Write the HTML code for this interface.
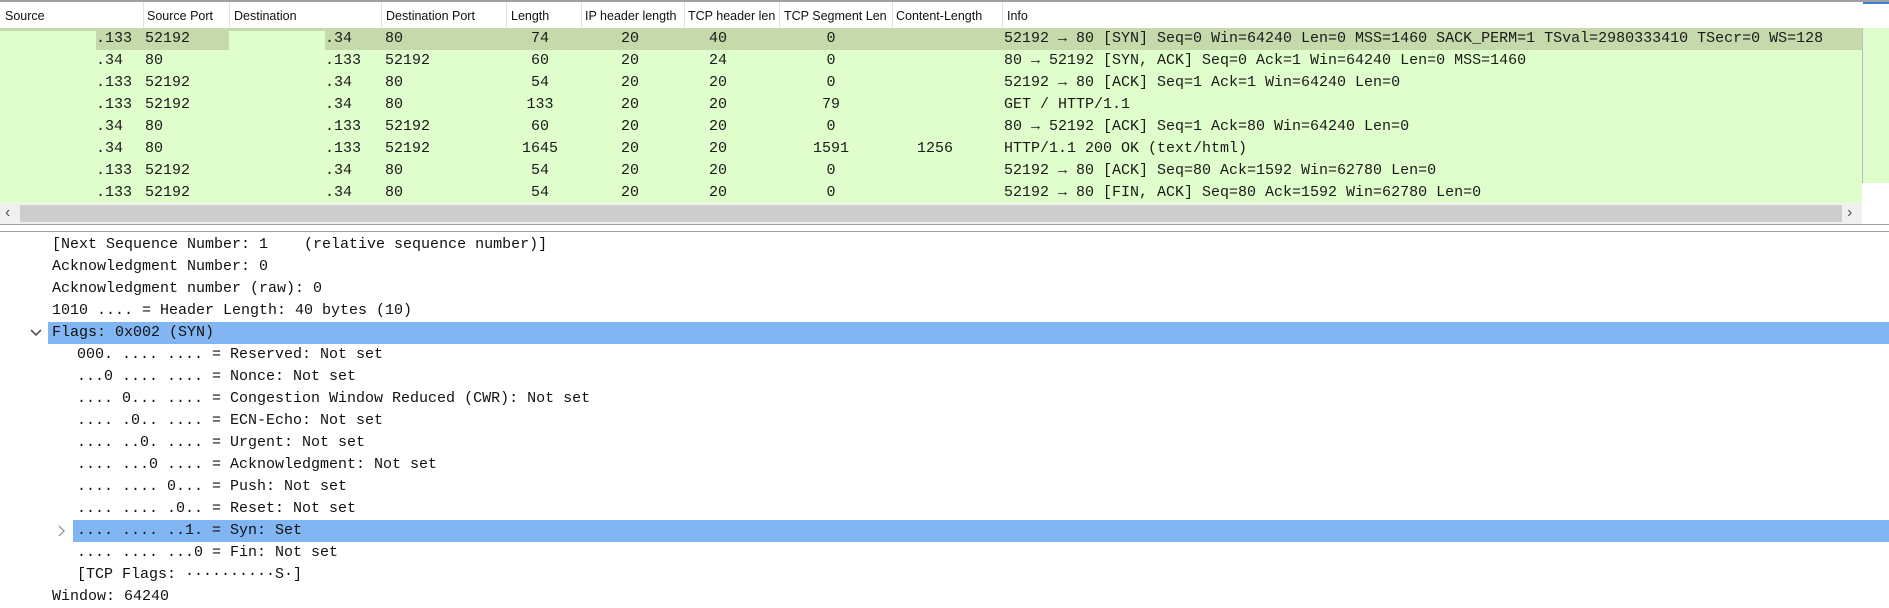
<!DOCTYPE html>
<html><head><meta charset="utf-8"><style>
body{margin:0;width:1889px;height:591px;overflow:hidden;background:#fff;position:relative;font-family:"Liberation Mono",monospace;}
.a{position:absolute;white-space:pre;}
.hd{position:absolute;top:0;left:0;width:1889px;height:28px;background:#fff;border-top:2px solid #a0a0a0;box-sizing:border-box;font-family:"Liberation Sans",sans-serif;font-size:12.5px;color:#111;}
.hd span{position:absolute;top:7px;}
.hd i{position:absolute;top:0;width:1px;height:26px;background:#e2e2e2;}
.rows{position:absolute;top:28px;left:0;width:1862px;height:176px;background:#e0fecb;}
.r{position:absolute;left:0;width:1862px;height:22px;font-size:15px;line-height:22px;color:#1a1a1a;}
.r span{position:absolute;top:0;}
.c{text-align:center;width:80px;}
.d{font-size:15px;line-height:22px;color:#111;position:absolute;white-space:pre;}
.hl{position:absolute;height:22px;background:#82b6f3;right:0;}
#det{position:absolute;left:0;top:2px;width:1889px;height:600px;}
</style></head><body>
<div class="hd">
<span style="left:5px">Source</span><i style="left:143px"></i>
<span style="left:147px">Source Port</span><i style="left:229px"></i>
<span style="left:234px">Destination</span><i style="left:381px"></i>
<span style="left:386px">Destination Port</span><i style="left:506px"></i>
<span style="left:511px">Length</span><i style="left:581px"></i>
<span style="left:585px">IP header length</span><i style="left:684px"></i>
<span style="left:688px">TCP header len</span><i style="left:779px"></i>
<span style="left:784px">TCP Segment Len</span><i style="left:892px"></i>
<span style="left:896px">Content-Length</span><i style="left:1002px"></i>
<span style="left:1007px">Info</span>
<b style="position:absolute;right:0;top:0;width:26px;height:2px;background:#3c7fd0"></b>
</div>
<div class="rows"></div>
<div style="position:absolute;left:1862px;top:28px;width:27px;height:155px;background:#e0fecb;border-left:1px solid #bbb"></div>
<div style="position:absolute;left:96px;top:28px;width:133px;height:22px;background:#c5d9aa"></div>
<div style="position:absolute;left:325px;top:28px;width:1537px;height:22px;background:#c5d9aa"></div>
<div style="position:absolute;left:0;top:28px;width:1862px;height:3px;background:#c5d9aa"></div>

<div class="r" style="top:28px"><span style="left:96px">.133</span><span style="left:145px">52192</span><span style="left:325px">.34</span><span style="left:385px">80</span><span class="c" style="left:500px">74</span><span class="c" style="left:590px">20</span><span class="c" style="left:678px">40</span><span class="c" style="left:791px">0</span><span style="left:1004px">52192 → 80 [SYN] Seq=0 Win=64240 Len=0 MSS=1460 SACK_PERM=1 TSval=2980333410 TSecr=0 WS=128</span></div>
<div class="r" style="top:50px"><span style="left:96px">.34</span><span style="left:145px">80</span><span style="left:325px">.133</span><span style="left:385px">52192</span><span class="c" style="left:500px">60</span><span class="c" style="left:590px">20</span><span class="c" style="left:678px">24</span><span class="c" style="left:791px">0</span><span style="left:1004px">80 → 52192 [SYN, ACK] Seq=0 Ack=1 Win=64240 Len=0 MSS=1460</span></div>
<div class="r" style="top:72px"><span style="left:96px">.133</span><span style="left:145px">52192</span><span style="left:325px">.34</span><span style="left:385px">80</span><span class="c" style="left:500px">54</span><span class="c" style="left:590px">20</span><span class="c" style="left:678px">20</span><span class="c" style="left:791px">0</span><span style="left:1004px">52192 → 80 [ACK] Seq=1 Ack=1 Win=64240 Len=0</span></div>
<div class="r" style="top:94px"><span style="left:96px">.133</span><span style="left:145px">52192</span><span style="left:325px">.34</span><span style="left:385px">80</span><span class="c" style="left:500px">133</span><span class="c" style="left:590px">20</span><span class="c" style="left:678px">20</span><span class="c" style="left:791px">79</span><span style="left:1004px">GET / HTTP/1.1</span></div>
<div class="r" style="top:116px"><span style="left:96px">.34</span><span style="left:145px">80</span><span style="left:325px">.133</span><span style="left:385px">52192</span><span class="c" style="left:500px">60</span><span class="c" style="left:590px">20</span><span class="c" style="left:678px">20</span><span class="c" style="left:791px">0</span><span style="left:1004px">80 → 52192 [ACK] Seq=1 Ack=80 Win=64240 Len=0</span></div>
<div class="r" style="top:138px"><span style="left:96px">.34</span><span style="left:145px">80</span><span style="left:325px">.133</span><span style="left:385px">52192</span><span class="c" style="left:500px">1645</span><span class="c" style="left:590px">20</span><span class="c" style="left:678px">20</span><span class="c" style="left:791px">1591</span><span class="c" style="left:895px">1256</span><span style="left:1004px">HTTP/1.1 200 OK  (text/html)</span></div>
<div class="r" style="top:160px"><span style="left:96px">.133</span><span style="left:145px">52192</span><span style="left:325px">.34</span><span style="left:385px">80</span><span class="c" style="left:500px">54</span><span class="c" style="left:590px">20</span><span class="c" style="left:678px">20</span><span class="c" style="left:791px">0</span><span style="left:1004px">52192 → 80 [ACK] Seq=80 Ack=1592 Win=62780 Len=0</span></div>
<div class="r" style="top:182px"><span style="left:96px">.133</span><span style="left:145px">52192</span><span style="left:325px">.34</span><span style="left:385px">80</span><span class="c" style="left:500px">54</span><span class="c" style="left:590px">20</span><span class="c" style="left:678px">20</span><span class="c" style="left:791px">0</span><span style="left:1004px">52192 → 80 [FIN, ACK] Seq=80 Ack=1592 Win=62780 Len=0</span></div>

<div style="position:absolute;left:0;top:203px;width:1862px;height:21px;background:#f0f0f0"></div>
<div style="position:absolute;left:20px;top:205px;width:1822px;height:17px;background:#cdcdcd"></div>
<div class="a" style="left:5px;top:204px;font-family:'Liberation Sans';font-size:16px;color:#555">‹</div>
<div class="a" style="left:1847px;top:204px;font-family:'Liberation Sans';font-size:16px;color:#555">›</div>
<div style="position:absolute;left:0;top:224px;width:1889px;height:1px;background:#a0a0a0"></div>
<div style="position:absolute;left:0;top:231px;width:1889px;height:1px;background:#a0a0a0"></div>

<div id="det">
<div class="hl" style="left:48px;top:320px"></div>
<div class="hl" style="left:73px;top:518px"></div>
<svg class="a" style="left:30px;top:326px" width="12" height="10"><path d="M1 2 L6 7 L11 2" stroke="#555" stroke-width="1.6" fill="none"/></svg>
<svg class="a" style="left:57px;top:523px" width="10" height="12"><path d="M2 1 L7 6 L2 11" stroke="#999" stroke-width="1.4" fill="none"/></svg>

<div class="d" style="left:52px;top:232px">[Next Sequence Number: 1    (relative sequence number)]</div>
<div class="d" style="left:52px;top:254px">Acknowledgment Number: 0</div>
<div class="d" style="left:52px;top:276px">Acknowledgment number (raw): 0</div>
<div class="d" style="left:52px;top:298px">1010 .... = Header Length: 40 bytes (10)</div>
<div class="d" style="left:52px;top:320px">Flags: 0x002 (SYN)</div>
<div class="d" style="left:77px;top:342px">000. .... .... = Reserved: Not set</div>
<div class="d" style="left:77px;top:364px">...0 .... .... = Nonce: Not set</div>
<div class="d" style="left:77px;top:386px">.... 0... .... = Congestion Window Reduced (CWR): Not set</div>
<div class="d" style="left:77px;top:408px">.... .0.. .... = ECN-Echo: Not set</div>
<div class="d" style="left:77px;top:430px">.... ..0. .... = Urgent: Not set</div>
<div class="d" style="left:77px;top:452px">.... ...0 .... = Acknowledgment: Not set</div>
<div class="d" style="left:77px;top:474px">.... .... 0... = Push: Not set</div>
<div class="d" style="left:77px;top:496px">.... .... .0.. = Reset: Not set</div>
<div class="d" style="left:77px;top:518px">.... .... ..1. = Syn: Set</div>
<div class="d" style="left:77px;top:540px">.... .... ...0 = Fin: Not set</div>
<div class="d" style="left:77px;top:562px">[TCP Flags: ··········S·]</div>
<div class="d" style="left:52px;top:584px">Window: 64240</div>
</div>
</body></html>
